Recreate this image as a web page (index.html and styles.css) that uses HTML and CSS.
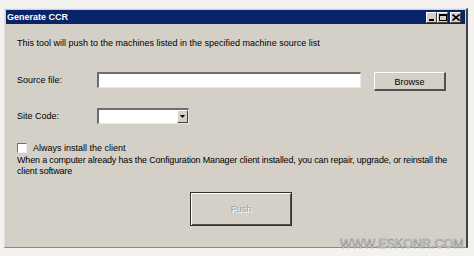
FILE: index.html
```html
<!DOCTYPE html>
<html>
<head>
<meta charset="utf-8">
<link rel="stylesheet" href="styles.css">
</head>
<body>
<div class="window">
  <div class="titlebar">
    <span class="title">Generate CCR</span>
    <div class="caption-buttons">
      <span class="cbtn"><svg width="8" height="7" viewBox="0 0 8 7"><rect x="1" y="5" width="5" height="2" fill="#000"/></svg></span>
      <span class="cbtn"><svg width="8" height="7" viewBox="0 0 8 7"><rect x="0.5" y="0.5" width="7" height="6" fill="none" stroke="#000"/><rect x="0" y="0" width="8" height="2" fill="#000"/></svg></span>
      <span class="cbtn close"><svg width="8" height="7" viewBox="0 0 8 7"><path d="M0.5 0.5 L7.5 6.5 M7.5 0.5 L0.5 6.5" stroke="#000" stroke-width="1.6"/></svg></span>
    </div>
  </div>
  <div class="client">
    <p class="intro">This tool will push to the machines listed in the specified machine source list</p>
    <div class="row row-source">
      <span class="label">Source file:</span>
      <span class="textbox"></span>
      <span class="button browse">Browse</span>
    </div>
    <div class="row row-site">
      <span class="label">Site Code:</span>
      <span class="combo"><span class="combo-btn"><svg width="5" height="3" viewBox="0 0 5 3"><path d="M0 0 H5 L2.5 3 Z" fill="#000"/></svg></span></span>
    </div>
    <div class="check-row">
      <span class="checkbox"></span>
      <span class="check-label">Always install the client</span>
    </div>
    <p class="desc">When a computer already has the Configuration Manager client installed, you can repair, upgrade, or reinstall the client software</p>
    <div class="push-row">
      <span class="button push">Push</span>
    </div>
  </div>
</div>
<div class="watermark">WWW.ESKONR.COM</div>
</body>
</html>
```
FILE: styles.css
```css
html, body {
  margin: 0;
  padding: 0;
}
body {
  width: 474px;
  height: 256px;
  background: #f3f2ee;
  font-family: "Liberation Sans", Arial, sans-serif;
  font-size: 9px;
  color: #000;
  position: relative;
  overflow: hidden;
}
.window {
  margin: 8px 0 0 4px;
  width: 461px;
  height: 238px;
  background: #d4d0c8;
  border-top: 1px solid #e8e8ee;
  border-left: 1px solid #e0dfda;
  border-right: 2px solid #40404a;
  border-bottom: 1px solid #8a8a8a;
  display: flex;
  flex-direction: column;
}
.titlebar {
  height: 14px;
  margin: 1px 1px 0 1px;
  background: #0a246a;
  display: flex;
  align-items: center;
  justify-content: space-between;
}
.title {
  color: #fff;
  font-weight: bold;
  font-family: "Liberation Sans", Arial, sans-serif;
  font-size: 9px;
  padding-left: 1px;
}
.caption-buttons {
  display: flex;
  padding-right: 4px;
}
.cbtn {
  width: 9px;
  height: 9px;
  background: #d4d0c8;
  border-top: 1px solid #fff;
  border-left: 1px solid #fff;
  border-right: 1px solid #404040;
  border-bottom: 1px solid #404040;
  display: flex;
  align-items: center;
  justify-content: center;
}
.cbtn.close {
  margin-left: 2px;
}
.client {
  flex: 1;
  padding: 0 0 0 12px;
  display: flex;
  flex-direction: column;
}
.intro {
  margin: 14px 0 0 0;
  line-height: 11px;
}
.row {
  display: flex;
  align-items: flex-start;
}
.row-source {
  margin-top: 23px;
}
.row-site {
  margin-top: 17px;
}
.label {
  width: 80px;
  line-height: 14px;
  padding-top: 1px;
}
.textbox {
  width: 261px;
  height: 13px;
  background: #fff;
  border-top: 2px solid #6e6e6e;
  border-left: 2px solid #6e6e6e;
  border-right: 1px solid #e8e8e8;
  border-bottom: 1px solid #e8e8e8;
}
.button {
  background: #d4d0c8;
  border-top: 1px solid #fff;
  border-left: 1px solid #fff;
  border-right: 2px solid #505050;
  border-bottom: 2px solid #505050;
  display: flex;
  align-items: center;
  justify-content: center;
  box-sizing: border-box;
}
.browse {
  margin-left: 13px;
  width: 72px;
  height: 19px;
  padding-top: 1px;
}
.combo {
  width: 89px;
  height: 13px;
  background: #fff;
  border-top: 2px solid #6e6e6e;
  border-left: 2px solid #6e6e6e;
  border-right: 1px solid #e8e8e8;
  border-bottom: 1px solid #e8e8e8;
  display: flex;
  justify-content: flex-end;
}
.combo-btn {
  width: 9px;
  height: 11px;
  background: #d4d0c8;
  border-top: 1px solid #fff;
  border-left: 1px solid #fff;
  border-right: 1px solid #404040;
  border-bottom: 1px solid #404040;
  display: flex;
  align-items: center;
  justify-content: center;
}
.check-row {
  margin-top: 18px;
  display: flex;
  align-items: center;
  height: 11px;
}
.checkbox {
  width: 8px;
  height: 8px;
  background: #fff;
  border-top: 1px solid #6e6e6e;
  border-left: 1px solid #6e6e6e;
  border-right: 1px solid #f0f0f0;
  border-bottom: 1px solid #f0f0f0;
}
.check-label {
  margin-left: 6px;
}
.desc {
  margin: 2px 0 0 0;
  line-height: 11px;
  width: 445px;
  letter-spacing: -0.17px;
}
.push-row {
  margin-top: 15px;
  padding-left: 173px;
  display: flex;
}
.push {
  width: 102px;
  height: 34px;
  border: 1px solid #303030;
  box-shadow: inset 1px 1px 0 #fff, inset -1px -1px 0 #505050;
  color: #a09c96;
  text-shadow: 1px 1px 0 #fff;
}
.watermark {
  position: absolute;
  left: 340px;
  top: 237px;
  font-family: "Liberation Sans", Arial, sans-serif;
  font-size: 12.5px;
  color: #eeeeee;
  -webkit-text-stroke: 0.6px #8c8c8c;
}
```
